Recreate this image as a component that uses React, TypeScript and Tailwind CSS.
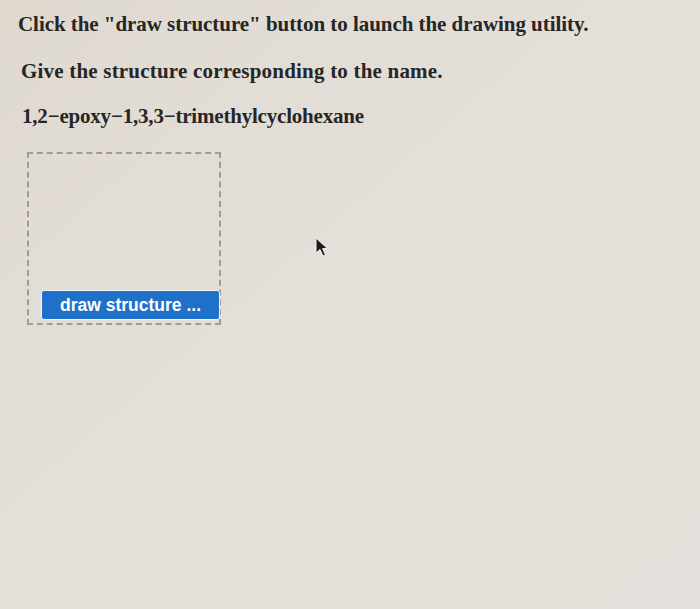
import React from "react";

export default function App() {
  return (
    <div className="w-[700px] h-[609px] overflow-hidden bg-linear-to-br from-[#dfd9d0] via-[#e4e0da] to-[#e3e0db] text-[#262626]">
      <div className="pl-[18px] pt-[10px]" style={{ fontFamily: '"Liberation Serif", "Times New Roman", serif' }}>
        <p className="text-[21px] font-bold leading-[28px] tracking-[-0.05px]">
          Click the "draw structure" button to launch the drawing utility.
        </p>
        <p className="mt-[19px] ml-[3px] text-[21px] font-bold leading-[28px] tracking-[0.2px]">
          Give the structure corresponding to the name.
        </p>
        <p className="mt-[17px] ml-[4px] text-[21px] font-bold leading-[28px] tracking-[-0.2px]">
          1,2−epoxy−1,3,3−trimethylcyclohexane
        </p>
      </div>
      <div className="flex items-start mt-[22px] ml-[27px]">
        <div className="w-[194px] h-[173px] border-2 border-dashed border-[#a39c92] flex flex-col justify-end pb-[3px] pl-[12px]">
          <button
            className="w-[179px] h-[30px] bg-[#1f70c9] text-white text-[17.5px] font-bold rounded-[3px] border border-[#f4f4f4] flex items-center justify-center"
            style={{ fontFamily: '"Liberation Sans", Arial, sans-serif' }}
          >
            draw structure ...
          </button>
        </div>
        <svg className="ml-[93px] mt-[85px]" width="16" height="20" viewBox="0 0 16 20">
          <path d="M2 1 L2 16 L6 12.5 L9 19 L11.5 18 L8.6 11.6 L13.5 11.6 Z" fill="#1c1c1c" stroke="#f5f5f5" strokeWidth="1" />
        </svg>
      </div>
    </div>
  );
}
